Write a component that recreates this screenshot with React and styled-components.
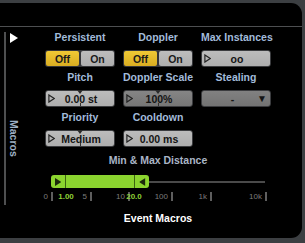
import styled, { createGlobalStyle } from 'styled-components';

const GlobalStyle = createGlobalStyle`
  html, body {
    margin: 0;
    background: #3c3f42;
  }
  body {
    font-family: "Liberation Sans", Arial, sans-serif;
  }
`

const ticks = [
  { label: '0', x: 0 },
  { label: '5', x: 39 },
  { label: '10', x: 77 },
  { label: '100', x: 120 },
  { label: '1k', x: 159 },
  { label: '10k', x: 214 },
]

const range = { min: 15, max: 83, end: 98, minLabel: '1.00', maxLabel: '20.0' }

const Play = ({ size = 8, outline, color = '#fff' }) => (
  <svg width={size * 0.8} height={size} viewBox="0 0 8 10">
    {outline
      ? <path d="M1 1 L7 5 L1 9 Z" fill="none" stroke="#222" strokeWidth="1.3" />
      : <path d="M0 0 L8 5 L0 10 Z" fill={color} />}
  </svg>
)

const Toggle = ({ on }) => (
  <ToggleWrap>
    <ToggleBtn $active={!on}>Off</ToggleBtn>
    <ToggleBtn $active={on}>On</ToggleBtn>
  </ToggleWrap>
)

const Value = ({ children, dim, notch }) => (
  <ValueBox $dim={dim} $notch={notch}>
    <Arrow><Play outline size={9} /></Arrow>
    <ValueText>{children}</ValueText>
  </ValueBox>
)

const App = () => {
  return (
    <>
      <GlobalStyle />
      <Panel>
        <Header />
        <Body>
          <Side>
            <Rule />
            <SideCol>
              <PlayWrap><Play size={10} /></PlayWrap>
              <SideLabel>Macros</SideLabel>
            </SideCol>
          </Side>
          <Main>
            <Grid>
              <Cell><Label>Persistent</Label><Toggle /></Cell>
              <Cell><Label>Doppler</Label><Toggle /></Cell>
              <Cell><Label>Max Instances</Label><Value>oo</Value></Cell>
              <Cell><Label>Pitch</Label><Value notch>0.00 st</Value></Cell>
              <Cell><Label>Doppler Scale</Label><Value notch dim>100%</Value></Cell>
              <Cell>
                <Label>Stealing</Label>
                <Select><SelectText>-</SelectText><Caret>▼</Caret></Select>
              </Cell>
              <Cell><Label>Priority</Label><Value notch>Medium</Value></Cell>
              <Cell><Label>Cooldown</Label><Value>0.00 ms</Value></Cell>
            </Grid>
            <RangeSection>
              <RangeLabel>Min &amp; Max Distance</RangeLabel>
              <Track>
                <Fill style={{ width: range.end }}>
                  <Handle style={{ left: 0, width: range.min }}>
                    <Play size={8} color="#1c2a0c" />
                  </Handle>
                  <Handle $right style={{ left: range.max, width: range.end - range.max }}>
                    <Flip><Play size={8} color="#1c2a0c" /></Flip>
                  </Handle>
                </Fill>
              </Track>
              <Scale>
                {ticks.map(t => (
                  <Tick key={t.label} style={{ left: t.x }}>
                    <TickLabel>{t.label}</TickLabel>
                  </Tick>
                ))}
                <Marker style={{ left: range.min }}>{range.minLabel}</Marker>
                <Marker style={{ left: range.max }}>{range.maxLabel}</Marker>
              </Scale>
            </RangeSection>
            <Footer>Event Macros</Footer>
          </Main>
        </Body>
      </Panel>
    </>
  )
}

const Panel = styled.div`
  margin-top: 3px;
  width: 302px;
  height: 235px;
  background: #000;
  border-radius: 0 11px 11px 0;
  overflow: hidden;
`
const Header = styled.div`
  height: 23px;
  border-bottom: 1px solid #4d4f51;
`
const Body = styled.div`
  display: flex;
`
const Side = styled.div`
  width: 45px;
  display: flex;
  padding-left: 4px;
  box-sizing: border-box;
  gap: 3px;
`
const Rule = styled.div`
  width: 2px;
  height: 173px;
  margin-top: 5px;
  background: #4e4f50;
`
const SideCol = styled.div`
  width: 10px;
  display: flex;
  flex-direction: column;
  align-items: center;
`
const PlayWrap = styled.div`
  margin-top: 6px;
  display: flex;
`
const SideLabel = styled.div`
  margin-top: 77px;
  writing-mode: vertical-rl;
  font-size: 10.5px;
  font-weight: bold;
  color: #9fb0c4;
  line-height: 10px;
`
const Main = styled.div`
  width: 226px;
  padding-top: 4px;
  display: flex;
  flex-direction: column;
  align-items: center;
`
const Grid = styled.div`
  display: grid;
  grid-template-columns: repeat(3, 70px);
  column-gap: 8px;
  row-gap: 4px;
`
const Cell = styled.div`
  display: flex;
  flex-direction: column;
  gap: 6px;
`
const Label = styled.div`
  height: 13px;
  line-height: 13px;
  text-align: center;
  font-size: 10.5px;
  font-weight: bold;
  color: #a2bbda;
  white-space: nowrap;
`
const ToggleWrap = styled.div`
  height: 17px;
  box-sizing: border-box;
  display: grid;
  grid-template-columns: 1fr 1fr;
  gap: 2px;
  padding: 1px;
  background: #35363a;
  border-radius: 3px;
`
const ToggleBtn = styled.div`
  border-radius: 2px;
  display: flex;
  align-items: center;
  justify-content: center;
  font-size: 10.5px;
  font-weight: bold;
  color: #1a1a1a;
  background: ${p => p.$active
    ? 'linear-gradient(#f0c935, #d9ad22)'
    : 'linear-gradient(#bdbdbd, #aeaeae)'};
`
const ValueBox = styled.div`
  position: relative;
  height: 17px;
  box-sizing: border-box;
  display: flex;
  align-items: center;
  border: 1px solid #3b3c3f;
  border-radius: 3px;
  background: ${p => p.$dim
    ? 'linear-gradient(#858585, #767676)'
    : 'linear-gradient(#bcbcbc, #aeaeae)'};
  &::before {
    content: '';
    display: ${p => p.$notch ? 'block' : 'none'};
    position: absolute;
    top: -1px;
    left: 50%;
    margin-left: -3px;
    border-left: 3px solid transparent;
    border-right: 3px solid transparent;
    border-top: 4px solid #2a2a2a;
  }
  &::after {
    content: '';
    display: ${p => p.$notch ? 'block' : 'none'};
    position: absolute;
    bottom: 0;
    left: 50%;
    width: 1px;
    height: 3px;
    background: #333;
  }
`
const Arrow = styled.div`
  width: 10px;
  padding-left: 2px;
  display: flex;
`
const ValueText = styled.div`
  flex: 1;
  text-align: center;
  padding-right: 10px;
  font-size: 10.5px;
  font-weight: bold;
  color: #141414;
`
const Select = styled.div`
  height: 17px;
  box-sizing: border-box;
  display: flex;
  align-items: center;
  border: 1px solid #3b3c3f;
  border-radius: 3px;
  background: linear-gradient(#818181, #737373);
  padding: 0 3px 0 6px;
`
const SelectText = styled.div`
  flex: 1;
  text-align: center;
  font-size: 10.5px;
  font-weight: bold;
  color: #151515;
`
const Caret = styled.div`
  font-size: 10px;
  line-height: 10px;
  color: #151515;
`
const RangeSection = styled.div`
  align-self: stretch;
  margin-top: 7px;
  display: flex;
  flex-direction: column;
  align-items: flex-start;
`
const RangeLabel = styled(Label)`
  align-self: center;
  color: #aab5c6;
`
const Track = styled.div`
  position: relative;
  margin-top: 8px;
  margin-left: 6px;
  width: 214px;
  height: 13px;
  &::before {
    content: '';
    position: absolute;
    left: 0;
    right: 0;
    top: 6px;
    height: 2px;
    background: #4a4a4a;
  }
`
const Fill = styled.div`
  position: absolute;
  left: 0;
  top: 0;
  height: 13px;
  border-radius: 3px;
  background: #8bd42f;
`
const Handle = styled.div`
  position: absolute;
  top: 0;
  height: 13px;
  box-sizing: border-box;
  display: flex;
  align-items: center;
  justify-content: center;
  ${p => p.$right ? 'border-left: 1px solid #3c6410;' : 'border-right: 1px solid #3c6410;'}
`
const Flip = styled.div`
  display: flex;
  transform: scaleX(-1);
`
const Scale = styled.div`
  position: relative;
  margin-top: 4px;
  margin-left: 6px;
  width: 214px;
  height: 9px;
`
const Tick = styled.div`
  position: absolute;
  top: 0;
  width: 2px;
  height: 9px;
  background: #5e5e5e;
`
const TickLabel = styled.div`
  position: absolute;
  right: 5px;
  top: -1px;
  font-size: 8px;
  line-height: 11px;
  color: #7c7c7c;
`
const Marker = styled.div`
  position: absolute;
  top: -1px;
  transform: translateX(-50%);
  font-size: 8px;
  line-height: 11px;
  font-weight: bold;
  color: #8fd136;
`
const Footer = styled.div`
  margin-top: 11px;
  font-size: 10.5px;
  font-weight: bold;
  color: #fff;
  line-height: 13px;
`

export default App
